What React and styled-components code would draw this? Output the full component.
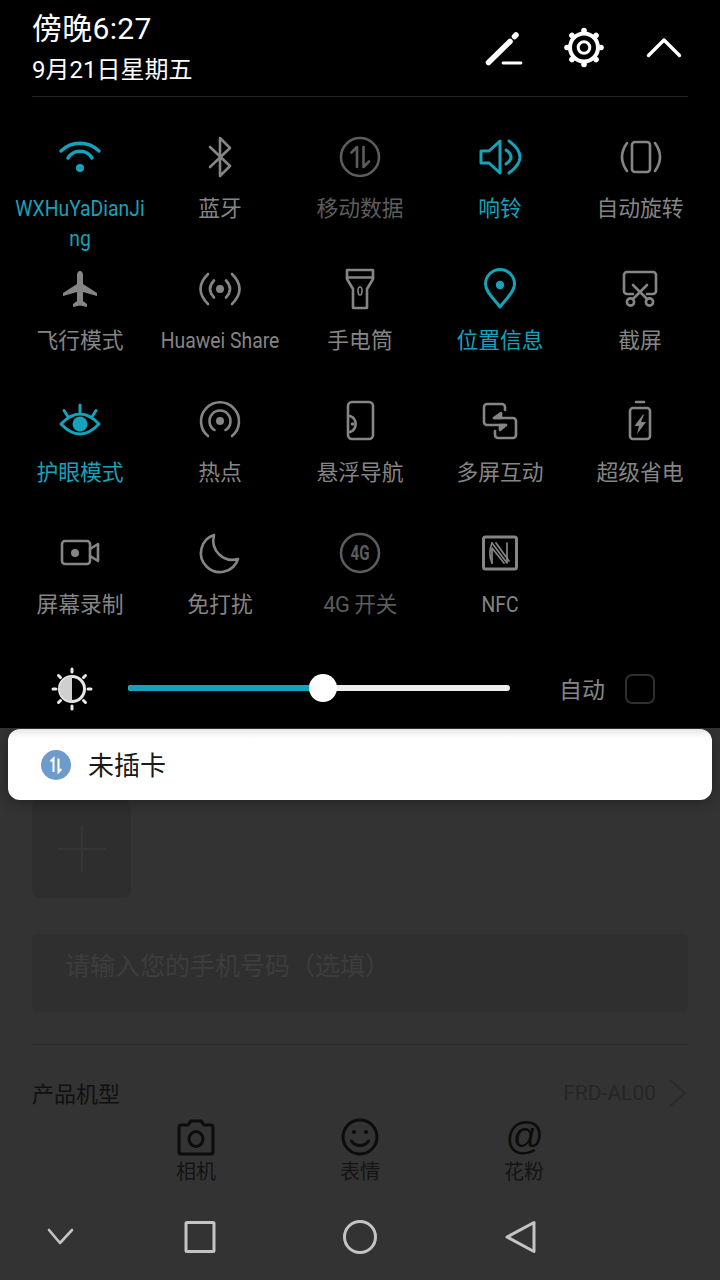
import React from 'react';
import styled, { createGlobalStyle } from 'styled-components';

const teal = '#14a3bb';
const grey = '#858585';
const dim = '#5c5c5c';
const toneColor = { on: teal, off: grey, dim };

const Global = createGlobalStyle`
  html, body {
    margin: 0;
    background: #333;
  }
  body {
    font-family: Roboto, "Noto Sans CJK SC", sans-serif;
    overflow: hidden;
  }
`;

const Page = styled.div`
  width: 720px;
  height: 1280px;
  overflow: hidden;
`;

const Panel = styled.section`
  height: 728px;
  padding: 0 32px;
  box-sizing: border-box;
  background: #000;
`;

const Header = styled.header`
  height: 97px;
  box-sizing: border-box;
  display: flex;
  justify-content: space-between;
  border-bottom: 1px solid #222;
`;

const Clock = styled.div`
  padding-top: 9px;
  color: #fff;
`;

const Time = styled.div`
  font-size: 30px;
  line-height: 40px;
  letter-spacing: 0.3px;
`;

const DateLine = styled.div`
  margin-top: 4px;
  font-size: 24px;
  line-height: 34px;
`;

const HeaderIcons = styled.div`
  display: flex;
  gap: 32px;
  padding-top: 23px;
  color: #fff;
`;

const Glyph = styled.svg.attrs({ viewBox: '0 0 48 48' })`
  display: block;
  width: 48px;
  height: 48px;
  flex: none;
  fill: none;
  stroke: currentColor;
  stroke-width: ${(p) => p.$weight || 2.6};
  stroke-linecap: round;
  stroke-linejoin: round;
`;

const Tiles = styled.div`
  display: grid;
  grid-template-columns: repeat(5, 140px);
  grid-auto-rows: 132px;
  margin: 36px -22px 0;
`;

const Tile = styled.div`
  display: flex;
  flex-direction: column;
  align-items: center;
  color: ${(p) => toneColor[p.$tone]};
`;

/* the phone's latin face is narrower than Roboto, so latin labels get squeezed */
const TileLabel = styled.div`
  flex: none;
  width: ${(p) => (p.$latin ? 150 : 132)}px;
  margin-top: 13px;
  font-size: ${(p) => (p.$latin ? 22 : 21.8)}px;
  line-height: 30px;
  text-align: center;
  word-break: break-all;
  white-space: ${(p) => (p.$nowrap ? 'nowrap' : 'normal')};
  letter-spacing: ${(p) => (p.$tight ? -0.5 : 0)}px;
  transform: ${(p) => (p.$latin ? 'scaleX(0.88)' : 'none')};
`;

const BrightnessRow = styled.div`
  display: flex;
  align-items: center;
  height: 54px;
  margin: 0 0 0 16px;
  color: ${grey};
`;

const Track = styled.div`
  position: relative;
  width: 382px;
  height: 6px;
  margin-left: 32px;
  border-radius: 3px;
  background: #eee;
`;

const TrackFill = styled.div`
  height: 100%;
  border-radius: 3px;
  background: ${teal};
`;

const Thumb = styled.div`
  position: absolute;
  top: -11px;
  width: 28px;
  height: 28px;
  margin-left: -14px;
  border-radius: 50%;
  background: #fff;
`;

const AutoLabel = styled.div`
  margin-left: 49px;
  font-size: 23px;
`;

const AutoBox = styled.div`
  width: 30px;
  height: 30px;
  margin: 2px 0 0 20px;
  box-sizing: border-box;
  border: 2px solid #2e2e2e;
  border-radius: 7px;
`;

const Notice = styled.div`
  position: relative;
  display: flex;
  align-items: center;
  gap: 17px;
  height: 71px;
  margin: 1px 8px 0;
  padding-left: 33px;
  border-radius: 12px;
  background: linear-gradient(#e6e6e6, #fff 9px);
  box-shadow: 0 3px 14px rgba(0, 0, 0, 0.3);
  color: #1a1a1a;
  font-size: 26px;
`;

const NoticeText = styled.span`
  margin-top: -3px;
`;

const NoticeBadge = styled.svg.attrs({ viewBox: '0 0 30 30' })`
  width: 30px;
  height: 30px;
  fill: none;
`;

const Behind = styled.div`
  padding: 0 32px;
`;

const AddBox = styled.div`
  display: flex;
  align-items: center;
  justify-content: center;
  width: 99px;
  height: 98px;
  border-radius: 8px;
  background: #2e2e2e;
  color: #363636;
`;

const PhoneInput = styled.div`
  height: 78px;
  margin-top: 36px;
  padding: 15px 0 0 33px;
  box-sizing: border-box;
  border-radius: 6px;
  background: #2f2f2f;
  color: #3d3d3d;
  font-size: 25px;
  line-height: 36px;
`;

const Rule = styled.div`
  height: 1px;
  margin-top: 32px;
  background: #2c2c2c;
`;

const ModelRow = styled.div`
  display: flex;
  justify-content: space-between;
  align-items: center;
  height: 30px;
  margin-top: 33px;
  color: #101010;
  font-size: 22px;
`;

const ModelLabel = styled.span`
  margin-top: -3px;
`;

const ModelValue = styled.div`
  display: flex;
  align-items: center;
  gap: 12px;
  color: #262626;
  font-size: 21px;
`;

const Attachments = styled.div`
  display: grid;
  grid-template-columns: repeat(3, 164px);
  justify-content: center;
  margin-top: 5px;
`;

const Attachment = styled.div`
  display: flex;
  flex-direction: column;
  align-items: center;
  color: #0c0c0c;
  font-size: 20px;
  line-height: 24px;
`;

const AttachmentLabel = styled.div`
  margin-top: -1px;
  color: #141414;
`;

const AtSign = styled.div`
  width: 48px;
  height: 48px;
  font-family: "Liberation Sans", sans-serif;
  font-style: italic;
  font-size: 38px;
  line-height: 46px;
  text-align: center;
`;

const NavBar = styled.nav`
  display: grid;
  grid-template-columns: 120px repeat(3, 160px);
  justify-items: center;
  margin-top: 29px;
  color: #c4c4c4;
`;

const icons = {
  wifi: (
    <g strokeWidth="3.400">
      <path d="M5 18A27 27 0 0 1 43 18" />
      <path d="M12 25A14 14 0 0 1 36 25" />
      <circle cx="24" cy="35" r="4" fill="currentColor" stroke="none" />
    </g>
  ),
  bluetooth: <path d="M14 14L34 33L24 43V5L34 15L14 34" />,
  data: (
    <>
      <circle cx="24" cy="24" r="19" />
      <path d="M21 34V14L15.500 19.500" />
      <path d="M27.500 14V34L33 28.500" />
    </>
  ),
  speaker: (
    <>
      <path d="M24 8L13 18H5V30H13L24 40Z" />
      <path d="M30 17Q40 24 30 31" />
      <path d="M33 8Q55 24 33 40" />
    </>
  ),
  rotate: (
    <>
      <rect x="16" y="9" width="18" height="30" rx="3" />
      <path d="M11 10Q1 24 11 38" />
      <path d="M39 10Q49 24 39 38" />
    </>
  ),
  plane: (
    <path
      fill="currentColor"
      stroke="none"
      d="M24 6C26 6 27 8 27 10V19L41 28V31L27 27V36L31 39V42L24 40.500L17 42V39L21 36V27L7 31V28L21 19V10C21 8 22 6 24 6Z"
    />
  ),
  share: (
    <>
      <circle cx="24" cy="24" r="4" fill="currentColor" stroke="none" />
      <path d="M18 15.500Q10 24 18 32.500" />
      <path d="M30 15.500Q38 24 30 32.500" />
      <path d="M12 9Q-3 24 12 39" />
      <path d="M36 9Q51 24 36 39" />
    </>
  ),
  torch: (
    <>
      <path d="M11 5H37V14L31 24V43H17V24L11 14Z" />
      <path d="M11 12.500H37" />
      <ellipse cx="24" cy="26" rx="2" ry="4" strokeWidth="1.600" />
    </>
  ),
  pin: (
    <>
      <path d="M24 42C18 34 9.500 27 9.500 19A14.500 14.500 0 0 1 38.500 19C38.500 27 30 34 24 42Z" />
      <circle cx="24" cy="20" r="4.200" fill="currentColor" stroke="none" />
    </>
  ),
  capture: (
    <>
      <path d="M17 29H11A3 3 0 0 1 8 26V10A3 3 0 0 1 11 7H37A3 3 0 0 1 40 10V26A3 3 0 0 1 37 29H31" />
      <path d="M17 20L31 34" />
      <path d="M31 20L17 34" />
      <circle cx="14.500" cy="37" r="3.600" />
      <circle cx="33.500" cy="37" r="3.600" />
    </>
  ),
  eye: (
    <>
      <path d="M5 27Q24 7 43 27Q24 47 5 27Z" />
      <circle cx="24" cy="27" r="7.500" fill="currentColor" stroke="none" />
      <path d="M24 8V15" />
      <path d="M8 13.500L11.500 19" />
      <path d="M40 13.500L36.500 19" />
    </>
  ),
  hotspot: (
    <>
      <circle cx="24" cy="24" r="4" fill="currentColor" stroke="none" />
      <path d="M18.500 33A10.500 10.500 0 1 1 29.500 33" />
      <path d="M12 39A19 19 0 1 1 36 39" />
    </>
  ),
  floating: (
    <>
      <rect x="12" y="5" width="25" height="37" rx="4" />
      <circle cx="16.500" cy="27" r="1.800" fill="currentColor" stroke="none" />
      <path d="M14 19A8.500 8.500 0 0 1 14 35" />
    </>
  ),
  multiscreen: (
    <>
      <path d="M29 13V10A3 3 0 0 0 26 7H11A3 3 0 0 0 8 10V25A3 3 0 0 0 11 28H30" />
      <path d="M19 34V38A3 3 0 0 0 22 41H37A3 3 0 0 0 40 38V24A3 3 0 0 0 37 21H18" />
      <path d="M25 16L18 21H25Z" fill="currentColor" />
      <path d="M24 33L30 28H24Z" fill="currentColor" />
    </>
  ),
  battery: (
    <>
      <rect x="14" y="11" width="20" height="31" rx="3" />
      <path d="M20 5H28" />
      <path fill="currentColor" stroke="none" d="M27 17.500L18.500 29H23L21 37L30 25H25L28 17.500Z" />
    </>
  ),
  record: (
    <>
      <rect x="6" y="12" width="28" height="23" rx="3" />
      <path d="M34 20L42 15V32L34 27" />
      <circle cx="19" cy="24" r="4" fill="currentColor" stroke="none" />
    </>
  ),
  moon: <path d="M18 6A19 19 0 1 0 42 30C28 34 14 22 18 6Z" />,
  fourG: (
    <>
      <circle cx="24" cy="24" r="19" />
      <text
        x="24"
        y="31"
        fill="currentColor"
        stroke="none"
        textAnchor="middle"
        fontFamily="Roboto, sans-serif"
        fontSize="20"
        fontWeight="700"
        textLength="19"
        lengthAdjust="spacingAndGlyphs"
      >
        4G
      </text>
    </>
  ),
  nfc: (
    <>
      <rect x="7.500" y="8" width="33" height="32" rx="2" strokeWidth="3" />
      <g strokeWidth="1.700">
        <path d="M16 14L31 34V14" />
        <path d="M16 14C13 21 13 27 16 34" />
        <path d="M16 34V19L28 34" />
        <path d="M20 14L33 32" />
      </g>
    </>
  ),
};

const tiles = [
  { icon: 'wifi', label: 'WXHuYaDianJing', tone: 'on', latin: true },
  { icon: 'bluetooth', label: '蓝牙', tone: 'off' },
  { icon: 'data', label: '移动数据', tone: 'dim' },
  { icon: 'speaker', label: '响铃', tone: 'on' },
  { icon: 'rotate', label: '自动旋转', tone: 'off' },
  { icon: 'plane', label: '飞行模式', tone: 'off' },
  { icon: 'share', label: 'Huawei Share', tone: 'off', latin: true, nowrap: true },
  { icon: 'torch', label: '手电筒', tone: 'off' },
  { icon: 'pin', label: '位置信息', tone: 'on' },
  { icon: 'capture', label: '截屏', tone: 'off' },
  { icon: 'eye', label: '护眼模式', tone: 'on' },
  { icon: 'hotspot', label: '热点', tone: 'off' },
  { icon: 'floating', label: '悬浮导航', tone: 'off' },
  { icon: 'multiscreen', label: '多屏互动', tone: 'off' },
  { icon: 'battery', label: '超级省电', tone: 'off' },
  { icon: 'record', label: '屏幕录制', tone: 'off' },
  { icon: 'moon', label: '免打扰', tone: 'off' },
  { icon: 'fourG', label: '4G 开关', tone: 'dim', tight: true },
  { icon: 'nfc', label: 'NFC', tone: 'off', latin: true },
];

const gearTeeth = [0, 45, 90, 135, 180, 225, 270, 315];
const BRIGHTNESS = 51;

export default function App() {
  return (
    <Page>
      <Global />
      <Panel>
        <Header>
          <Clock>
            <Time>傍晚6:27</Time>
            <DateLine>9月21日星期五</DateLine>
          </Clock>
          <HeaderIcons>
            <Glyph $weight={5}>
              <path d="M8.500 39.500L30 18.500" strokeWidth="5.500" />
              <path d="M34.500 13.500L36 12" strokeWidth="5.500" />
              <path d="M23 40H41" strokeWidth="2.800" />
            </Glyph>
            <Glyph $weight={4}>
              <circle cx="24" cy="24.500" r="14" />
              <circle cx="24" cy="24.500" r="5.800" strokeWidth="3" />
              {gearTeeth.map((a) => (
                <circle key={a} cx="24" cy="7.500" r="2.800" fill="currentColor" stroke="none" transform={`rotate(${a} 24 24.500)`} />
              ))}
            </Glyph>
            <Glyph $weight={3.4}>
              <path d="M8.500 32.500L24 17L39.500 32.500" />
            </Glyph>
          </HeaderIcons>
        </Header>

        <Tiles>
          {tiles.map((t) => (
            <Tile key={t.label} $tone={t.tone}>
              <Glyph $weight={t.tone === 'on' ? 3 : 2.6}>{icons[t.icon]}</Glyph>
              <TileLabel $latin={t.latin} $nowrap={t.nowrap} $tight={t.tight}>{t.label}</TileLabel>
            </Tile>
          ))}
        </Tiles>

        <BrightnessRow>
          <Glyph $weight={3} style={{ color: '#e8e8e8' }}>
            <circle cx="24" cy="25" r="12.500" />
            <path d="M24 12.500A12.500 12.500 0 0 0 24 37.500Z" fill="#cfcfcf" stroke="none" />
            <path d="M24 5V8M24 42V45M5 25H8M40 25H43M10.500 11.500L12.500 13.500M35.500 36.500L37.500 38.500M37.500 11.500L35.500 13.500M12.500 36.500L10.500 38.500" />
          </Glyph>
          <Track>
            <TrackFill style={{ width: `${BRIGHTNESS}%` }} />
            <Thumb style={{ left: `${BRIGHTNESS}%` }} />
          </Track>
          <AutoLabel>自动</AutoLabel>
          <AutoBox />
        </BrightnessRow>
      </Panel>

      <Notice>
        <NoticeBadge>
          <circle cx="15" cy="15" r="15" fill="#6d9bcb" />
          <path d="M12.500 22V8.500L9.500 11.500M17.500 8.500V22L20.500 19" stroke="#fff" strokeWidth="2" />
        </NoticeBadge>
        <NoticeText>未插卡</NoticeText>
      </Notice>

      <Behind>
        <AddBox>
          <Glyph $weight={2}>
            <path d="M24 1V47M1 24H47" />
          </Glyph>
        </AddBox>
        <PhoneInput>请输入您的手机号码（选填）</PhoneInput>
        <Rule />
        <ModelRow>
          <ModelLabel>产品机型</ModelLabel>
          <ModelValue>
            FRD-AL00
            <svg width="20" height="28" viewBox="0 0 20 28" fill="none" stroke="#2a2a2a" strokeWidth="2">
              <path d="M2 1L17 14L2 27" />
            </svg>
          </ModelValue>
        </ModelRow>
        <Attachments>
          <Attachment>
            <Glyph $weight={3}>
              <path d="M9 12H16L19 8H29L32 12H39A2 2 0 0 1 41 14V39A2 2 0 0 1 39 41H9A2 2 0 0 1 7 39V14A2 2 0 0 1 9 12Z" />
              <ellipse cx="24" cy="26" rx="7" ry="7.500" />
            </Glyph>
            <AttachmentLabel>相机</AttachmentLabel>
          </Attachment>
          <Attachment>
            <Glyph $weight={3}>
              <circle cx="24" cy="24" r="17" />
              <circle cx="18" cy="19" r="2" fill="currentColor" stroke="none" />
              <circle cx="30" cy="19" r="2" fill="currentColor" stroke="none" />
              <path d="M15.500 28C19 34 29 34 32.500 28" />
            </Glyph>
            <AttachmentLabel>表情</AttachmentLabel>
          </Attachment>
          <Attachment>
            <AtSign>@</AtSign>
            <AttachmentLabel>花粉</AttachmentLabel>
          </Attachment>
        </Attachments>
      </Behind>

      <NavBar>
        <Glyph>
          <path d="M13 17L24 30L36 17" />
        </Glyph>
        <Glyph $weight={3}>
          <rect x="10" y="9.500" width="28" height="29" rx="1" />
        </Glyph>
        <Glyph $weight={3}>
          <circle cx="24" cy="24" r="15.500" />
        </Glyph>
        <Glyph $weight={3}>
          <path d="M11 24L38 9.500V38.500Z" />
        </Glyph>
      </NavBar>
    </Page>
  );
}
